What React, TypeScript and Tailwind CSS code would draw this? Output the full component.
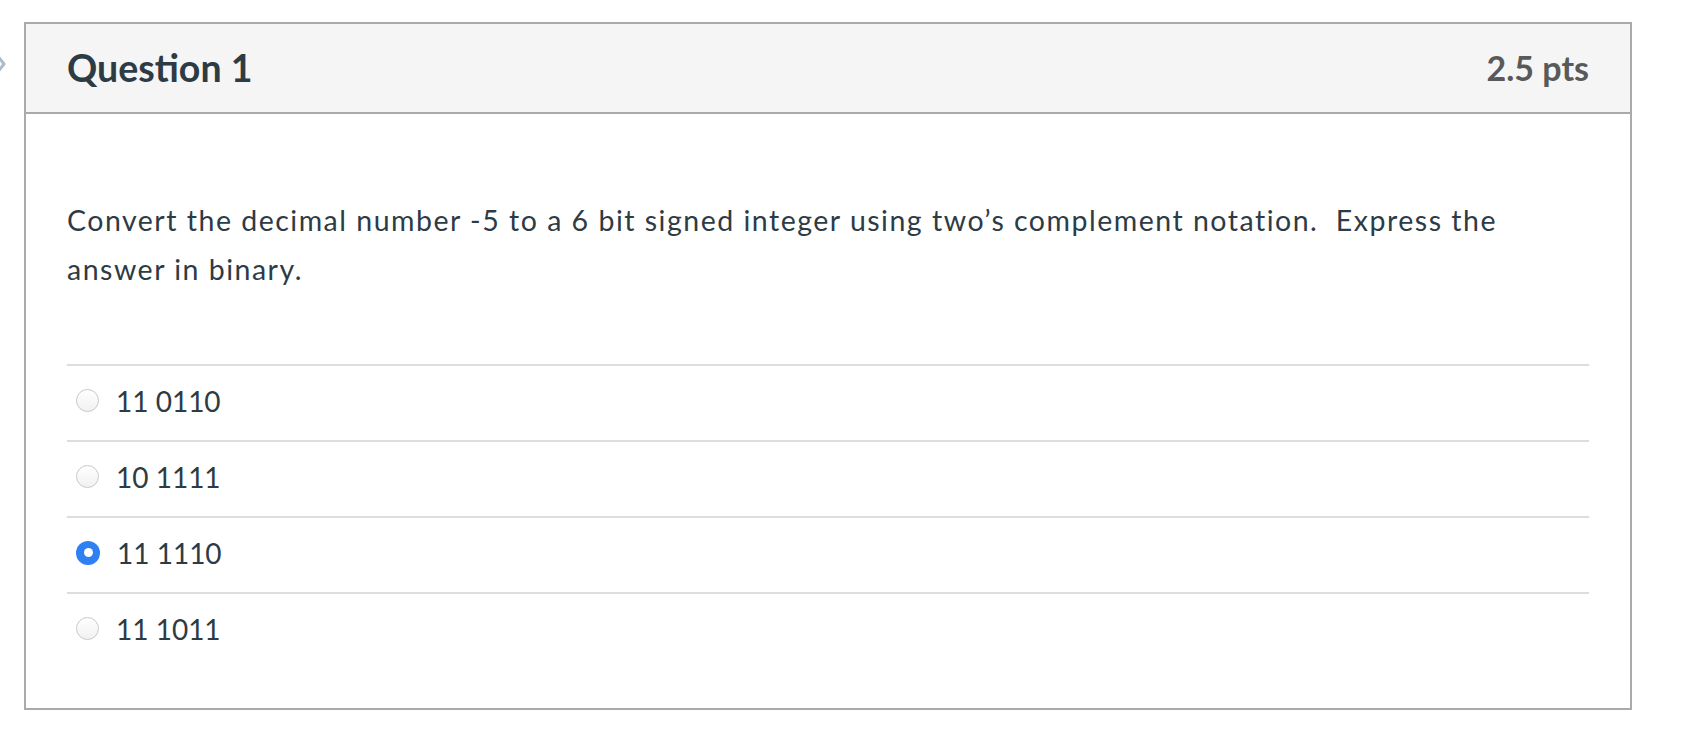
import React from "react";

const options = [
  { label: "11 0110", selected: false },
  { label: "10 1111", selected: false },
  { label: "11 1110", selected: true },
  { label: "11 1011", selected: false },
];

const questionText =
  "Convert the decimal number -5 to a 6 bit signed integer using two’s complement notation.\u00a0 Express the answer in binary.";

function Radio({ selected }: { selected: boolean }) {
  if (selected) {
    return (
      <span className="flex h-[24px] w-[24px] shrink-0 items-center justify-center rounded-full bg-[#2f7ff5]">
        <span className="h-[9px] w-[9px] rounded-full bg-white" />
      </span>
    );
  }
  return (
    <span className="h-[23px] w-[23px] shrink-0 rounded-full border border-[#c8c8c8] bg-gradient-to-b from-white to-[#f1f1f1]" />
  );
}

export default function App() {
  return (
    <div
      className="relative h-[742px] w-full overflow-hidden bg-white"
      style={{ fontFamily: "Lato, 'Open Sans', sans-serif" }}
    >
      <svg
        className="absolute left-[-12px] top-[52px]"
        width="20"
        height="24"
        viewBox="0 0 20 24"
        fill="none"
      >
        <path d="M9 3 L16 12 L9 21" stroke="#a9bccd" strokeWidth="3" strokeLinejoin="round" />
      </svg>
      <div className="ml-[24px] mt-[22px] flex h-[688px] w-[1608px] flex-col border-2 border-[#aaaaaa]">
        <div className="flex h-[90px] shrink-0 items-center justify-between border-b-2 border-[#aaaaaa] bg-[#f5f5f5] px-[41px]">
          <h2 className="text-[37.5px] font-bold leading-none text-[#2d3b45]">Question 1</h2>
          <span className="text-[34px] font-bold leading-none text-[#595959]">2.5 pts</span>
        </div>
        <div className="flex flex-col px-[41px] pt-[82px]">
          <p className="max-w-[1470px] text-[28.5px] leading-[49px] tracking-[1.5px] text-[#2d3b45]">
            {questionText}
          </p>
          <div className="mt-[70px] flex flex-col">
            {options.map((o) => (
              <div
                key={o.label}
                className="flex h-[76px] items-center gap-[17px] border-t-2 border-[#dddddd] pb-[5px] pl-[9px]"
              >
                <Radio selected={o.selected} />
                <span className="text-[28px] leading-none text-[#2d3b45]">{o.label}</span>
              </div>
            ))}
          </div>
        </div>
      </div>
    </div>
  );
}
